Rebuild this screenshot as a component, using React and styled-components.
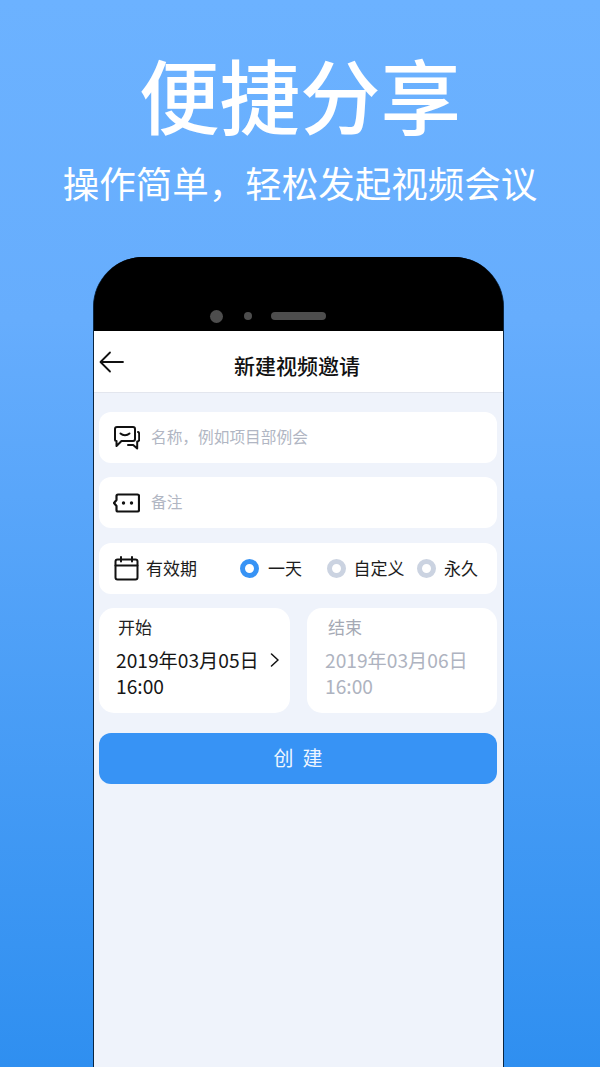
import React from "react";
import styled, { createGlobalStyle } from "styled-components";

const Global = createGlobalStyle`
  html, body { margin: 0; padding: 0; }
  body { font-family: "Noto Sans CJK SC", "Noto Sans", sans-serif; }
  * { box-sizing: border-box; }
`;

const Page = styled.div`
  width: 600px;
  height: 1067px;
  overflow: hidden;
  display: flex;
  flex-direction: column;
  align-items: flex-start;
  background: linear-gradient(180deg, #6cb2ff 0%, #66adfd 30%, #2f8ff0 100%);
`;
const Hero = styled.h1`
  width: 100%;
  height: 148px;
  margin: 0;
  padding-top: 37px;
  font-size: 80.500px;
  line-height: 112px;
  font-weight: 500;
  color: #fff;
  text-align: center;
`;
const Sub = styled.p`
  width: 100%;
  height: 109px;
  margin: 0;
  padding-top: 7px;
  font-size: 36.500px;
  line-height: 56px;
  font-weight: 400;
  color: #fff;
  text-align: center;
`;
const Phone = styled.div`
  margin-left: 93px;
  width: 411px;
  flex: 1;
  background: #000;
  border: solid #0a2540;
  border-width: 0 1px;
  border-radius: 50px 50px 0 0;
  display: flex;
  flex-direction: column;
  overflow: hidden;
`;
const Bezel = styled.div`
  height: 74px;
  flex: none;
  background: #000;
  display: flex;
  align-items: center;
  padding: 59px 0 15px 116px;
`;
const Lens = styled.span`
  width: 13px;
  height: 13px;
  border-radius: 50%;
  background: #4d4d4d;
`;
const Dot = styled.span`
  width: 8px;
  height: 8px;
  margin-left: 21px;
  border-radius: 50%;
  background: #4d4d4d;
`;
const Speaker = styled.span`
  width: 55px;
  height: 8px;
  margin-left: 19px;
  border-radius: 4px;
  background: #4d4d4d;
`;
const Screen = styled.div`
  flex: 1;
  background: #eff3fb;
  display: flex;
  flex-direction: column;
`;
const Nav = styled.header`
  height: 62px;
  flex: none;
  background: #fff;
  border-bottom: 1px solid #e3e6ee;
  display: grid;
  grid-template-columns: 48px 1fr 48px;
  align-items: center;
  padding-left: 5px;
  padding-right: 8px;
`;
const BackIcon = styled.svg`
  margin-top: 1px;
`;
const NavTitle = styled.h2`
  margin: 0;
  padding-top: 6px;
  font-size: 21px;
  line-height: 30px;
  font-weight: 500;
  color: #111;
  text-align: center;
`;
const Form = styled.div`
  padding: 19px 6px 0 5px;
  display: flex;
  flex-direction: column;
  gap: 14px;
`;
const Card = styled.div`
  height: 51px;
  margin-top: ${(p) => p.$push || 0}px;
  background: #fff;
  border-radius: 12px;
  display: flex;
  align-items: center;
  padding-left: 15px;
`;
const TagIcon = styled.svg`
  margin-left: -1px;
`;
const Placeholder = styled.span`
  margin-left: 11px;
  padding-bottom: 2px;
  font-size: 15.700px;
  color: #b1b6c3;
`;
const Label = styled.span`
  margin-left: 7px;
  margin-right: 43px;
  padding-bottom: 3px;
  font-size: 17px;
  color: #1c1c1c;
`;
const Radio = styled.span`
  display: flex;
  align-items: center;
  gap: ${(p) => p.$textGap}px;
  margin-right: ${(p) => p.$gap}px;
`;
const RadioText = styled.span`
  padding-bottom: 3px;
  font-size: 17px;
  color: #1c1c1c;
`;
const Ring = styled.span`
  width: 19px;
  height: 19px;
  border-radius: 50%;
  border: 5.500px solid ${(p) => (p.$on ? "#3793f5" : "#cbd3e1")};
  background: #fff;
`;
const DateRow = styled.div`
  display: flex;
  gap: 17px;
`;
const DateCard = styled.div`
  flex: ${(p) => (p.$off ? "1" : "0 0 191px")};
  height: 105px;
  background: #fff;
  border-radius: 15px;
  padding: 6px 0 0 ${(p) => (p.$off ? 18 : 17)}px;
  color: ${(p) => (p.$off ? "#aeb3c0" : "#161616")};
`;
const DateLabel = styled.div`
  padding-left: ${(p) => (p.$off ? 3 : 2)}px;
  font-size: 17px;
  line-height: 26px;
  margin-bottom: 7px;
  color: ${(p) => (p.$off ? "#a5a9b4" : "#222")};
`;
const DateLine = styled.div`
  display: flex;
  align-items: center;
  height: 26px;
  font-size: 19.200px;
  line-height: 26px;
  white-space: nowrap;
`;
const Chevron = styled.svg`
  margin-left: 11px;
`;
const Submit = styled.button`
  margin-top: 6px;
  height: 51px;
  border: 0;
  border-radius: 12px;
  background: #3793f5;
  color: #eef6ff;
  font: 400 20px "Noto Sans CJK SC", sans-serif;
  letter-spacing: 9px;
  padding: 0 0 2px 9px;
`;

const ic = { fill: "none", stroke: "#111", strokeWidth: 2, strokeLinecap: "round", strokeLinejoin: "round" };

export default function App() {
  return (
    <Page>
      <Global />
      <Hero>便捷分享</Hero>
      <Sub>操作简单，轻松发起视频会议</Sub>
      <Phone>
        <Bezel>
          <Lens />
          <Dot />
          <Speaker />
        </Bezel>
        <Screen>
          <Nav>
            <BackIcon width="25" height="22" viewBox="0 0 25 22" {...ic} strokeWidth="1.800">
              <path d="M24 11H2M11 1.500 1.500 11 11 20.500" />
            </BackIcon>
            <NavTitle>新建视频邀请</NavTitle>
          </Nav>
          <Form>
            <Card>
              <svg width="26" height="24" viewBox="0 0 26 24" {...ic}>
                <path d="M3 1h16a2 2 0 0 1 2 2v10a2 2 0 0 1-2 2H7.500L2.500 20v-5A1.500 1.500 0 0 1 1 13.500V3a2 2 0 0 1 2-2Z" />
                <path d="M6.500 7.500c2.500 2.200 6.500 2.200 9 0" />
                <path d="M24 6c1 .3 1.200 1 1.200 2v5.500c0 1.200-.6 2-2 2v7l-4-3.500H14" />
              </svg>
              <Placeholder>名称，例如项目部例会</Placeholder>
            </Card>
            <Card>
              <TagIcon width="27" height="20" viewBox="0 0 27 20" {...ic} strokeWidth="2.200">
                <path d="M5 1.500h19.500a1.500 1.500 0 0 1 1.500 1.500v14a1.500 1.500 0 0 1-1.500 1.500H5A1.500 1.500 0 0 1 3.500 17v-4L1 10l2.500-3V3A1.500 1.500 0 0 1 5 1.500Z" />
                <circle cx="10.500" cy="10" r="1.700" fill="#111" stroke="none" />
                <circle cx="18.500" cy="10" r="1.700" fill="#111" stroke="none" />
              </TagIcon>
              <Placeholder>备注</Placeholder>
            </Card>
            <Card $push={1}>
              <svg width="25" height="25" viewBox="0 0 25 25" {...ic}>
                <rect x="1.500" y="3.500" width="22" height="20" rx="2" />
                <path d="M1.500 9.500h22M7 1v4.500M18 1v4.500" />
              </svg>
              <Label>有效期</Label>
              <Radio $gap={25} $textGap={9}>
                <Ring $on />
                <RadioText>一天</RadioText>
              </Radio>
              <Radio $gap={12} $textGap={7.500}>
                <Ring />
                <RadioText>自定义</RadioText>
              </Radio>
              <Radio $gap={0} $textGap={8.500}>
                <Ring />
                <RadioText>永久</RadioText>
              </Radio>
            </Card>
            <DateRow>
              <DateCard>
                <DateLabel>开始</DateLabel>
                <DateLine>
                  2019年03月05日
                  <Chevron width="9" height="14" viewBox="0 0 9 14" {...ic} strokeWidth="1.500">
                    <path d="M1.500 1 8 7l-6.500 6" />
                  </Chevron>
                </DateLine>
                <DateLine>16:00</DateLine>
              </DateCard>
              <DateCard $off>
                <DateLabel $off>结束</DateLabel>
                <DateLine>2019年03月06日</DateLine>
                <DateLine>16:00</DateLine>
              </DateCard>
            </DateRow>
            <Submit>创建</Submit>
          </Form>
        </Screen>
      </Phone>
    </Page>
  );
}
